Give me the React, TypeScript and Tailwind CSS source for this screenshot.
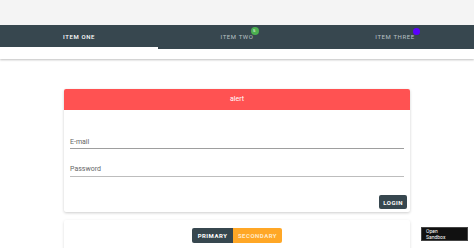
import React from "react";

const TABS = [
  { label: "Item One", active: true, badge: null as null | "green" | "purple" },
  { label: "Item Two", active: false, badge: "green" as const },
  { label: "Item Three", active: false, badge: "purple" as const },
];

function Tab({ label, active, badge }: { label: string; active: boolean; badge: null | "green" | "purple" }) {
  return (
    <div className="flex-1 flex flex-col">
      <div className="h-[22px] flex items-center justify-center">
        <span
          className={`relative uppercase tracking-[0.6px] text-[6px] ${
            active ? "text-white font-medium" : "text-[#b7c0c5] font-normal"
          }`}
        >
          {label}
          {badge === "green" && (
            <span className="absolute -right-[5px] -top-[5px] w-[8px] h-[8px] rounded-full bg-[#4caf50] text-white text-[4px] flex items-center justify-center">
              5
            </span>
          )}
          {badge === "purple" && (
            <span className="absolute -right-[5px] -top-[4px] w-[7px] h-[7px] rounded-full bg-[#5b00ff]" />
          )}
        </span>
      </div>
      <div className={`h-[2px] ${active ? "bg-white" : "bg-transparent"}`} />
    </div>
  );
}

export default function App() {
  return (
    <div className="w-[474px] h-[248px] overflow-hidden bg-white font-['Roboto',sans-serif] relative">
      <div className="shadow-[0_1px_2px_rgba(0,0,0,0.25)]">
        <div className="h-[25px] bg-[#f4f4f4]" />
        <div className="flex bg-[#37474f]">
          {TABS.map((t) => (
            <Tab key={t.label} {...t} />
          ))}
        </div>
        <div className="h-[10px] bg-white" />
      </div>

      <div className="w-[346px] mx-auto mt-[30px] flex flex-col">
        <div className="bg-white rounded-[2px] shadow-[0_1px_3px_rgba(0,0,0,0.2)]">
          <div className="h-[21px] bg-[#ff5252] rounded-t-[2px] flex items-center justify-center text-white text-[7px]">
            alert
          </div>
          <div className="px-[6px] pt-[29px]">
            <div className="text-[7px] text-[#666] leading-none pb-[2px]">E-mail</div>
            <div className="h-px bg-[#9e9e9e]" />
            <div className="text-[7px] text-[#666] leading-none pt-[17px] pb-[3px]">Password</div>
            <div className="h-px bg-[#bdbdbd]" />
          </div>
          <div className="flex justify-end px-[3px] pt-[18px] pb-[3px]">
            <button className="h-[14px] px-[4px] rounded-[2px] bg-[#37474f] text-white text-[6px] font-bold tracking-[0.5px] uppercase">
              Login
            </button>
          </div>
        </div>

        <div className="mt-[8px] bg-white rounded-[2px] shadow-[0_1px_3px_rgba(0,0,0,0.15)] pt-[8px] pb-[10px] flex justify-center">
          <div className="flex">
            <button className="h-[15px] w-[41px] rounded-l-[2px] bg-[#37474f] text-white text-[6px] font-bold tracking-[0.5px] uppercase">
              Primary
            </button>
            <button className="h-[15px] w-[49px] rounded-r-[2px] bg-[#ffa726] text-[#ffe9c6] text-[6px] font-bold tracking-[0.5px] uppercase">
              Secondary
            </button>
          </div>
        </div>
      </div>

      <div className="absolute left-[421px] top-[227px] w-[47px] h-[14px] bg-[#111] border border-[#444] text-white text-[5px] leading-[5.5px] px-[4px] pt-[1px]">
        Open
        <br />
        Sandbox
      </div>
    </div>
  );
}
